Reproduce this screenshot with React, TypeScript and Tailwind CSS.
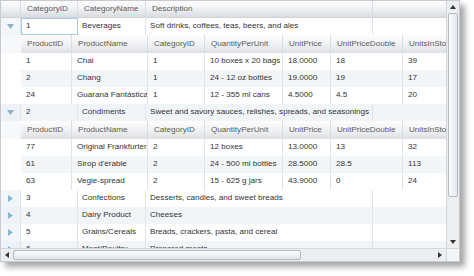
import React from "react";

type Col = { w: number; label: string };

const masterCols: Col[] = [
  { w: 57, label: "CategoryID" },
  { w: 68, label: "CategoryName" },
  { w: 227, label: "Description" },
  { w: 75, label: "" },
];

const detailCols: Col[] = [
  { w: 51, label: "ProductID" },
  { w: 76, label: "ProductName" },
  { w: 57, label: "CategoryID" },
  { w: 78, label: "QuantityPerUnit" },
  { w: 48, label: "UnitPrice" },
  { w: 72, label: "UnitPriceDouble" },
  { w: 60, label: "UnitsInStock" },
];

const beverages = [
  ["1", "Chai", "1", "10 boxes x 20 bags", "18.0000", "18", "39"],
  ["2", "Chang", "1", "24 - 12 oz bottles", "19.0000", "19", "17"],
  ["24", "Guaraná Fantástica", "1", "12 - 355 ml cans", "4.5000", "4.5", "20"],
];

const condiments = [
  ["77", "Original Frankfurter grüne Soße", "2", "12 boxes", "13.0000", "13", "32"],
  ["61", "Sirop d'érable", "2", "24 - 500 ml bottles", "28.5000", "28.5", "113"],
  ["63", "Vegie-spread", "2", "15 - 625 g jars", "43.9000", "0", "24"],
];

const collapsed = [
  ["3", "Confections", "Desserts, candies, and sweet breads"],
  ["4", "Dairy Product", "Cheeses"],
  ["5", "Grains/Cereals", "Breads, crackers, pasta, and cereal"],
  ["6", "Meat/Poultry", "Prepared meats"],
];

function Indicator({ open, tinted }: { open?: boolean; tinted?: boolean }) {
  return (
    <div
      className={`w-[20px] shrink-0 flex items-center justify-center border-r border-[#dfe5ea] ${
        tinted ? "bg-[#eef2f6]" : "bg-[#f3f6f8]"
      }`}
    >
      {open ? (
        <svg width="7" height="5" viewBox="0 0 7 5">
          <path d="M0 0h7L3.5 5z" fill="#8fb1c7" />
        </svg>
      ) : (
        <svg width="5" height="7" viewBox="0 0 5 7">
          <path d="M0 0v7l5-3.5z" fill="#86b8d2" />
        </svg>
      )}
    </div>
  );
}

function HeaderCell({ w, label, last }: Col & { last?: boolean }) {
  return (
    <div
      style={{ width: w }}
      className={`shrink-0 h-full flex items-center pl-[6px] whitespace-nowrap overflow-hidden text-[#5b5b5b] ${
        last ? "" : "border-r border-[#d9dde2]"
      }`}
    >
      {label}
    </div>
  );
}

function DetailBlock({ rows }: { rows: string[][] }) {
  return (
    <>
      <div className="flex h-[18px] shrink-0">
        <div className="w-[20px] shrink-0 bg-[#f7f8f9]" />
        <div className="flex h-full bg-gradient-to-b from-[#fdfdfd] via-[#f1f2f4] to-[#dcdfe3]">
          {detailCols.map((c, i) => (
            <HeaderCell key={i} {...c} last={i === detailCols.length - 1} />
          ))}
        </div>
      </div>
      {rows.map((r, ri) => (
        <div
          key={ri}
          className={`flex h-[17px] shrink-0 ${ri === 1 ? "bg-[#f3f6f9]" : "bg-white"}`}
        >
          <div className="w-[20px] shrink-0 bg-white" />
          {r.map((v, ci) => (
            <div
              key={ci}
              style={{ width: detailCols[ci].w }}
              className={`shrink-0 flex items-center pl-[5px] whitespace-nowrap overflow-hidden text-[#333] ${
                ci < r.length - 1 ? "border-r border-[#e1e5e9]" : ""
              }`}
            >
              {v}
            </div>
          ))}
        </div>
      ))}
    </>
  );
}

function MasterRow({
  id,
  name,
  desc,
  open,
  tinted,
  focus,
}: {
  id: string;
  name: string;
  desc: string;
  open?: boolean;
  tinted?: boolean;
  focus?: boolean;
}) {
  return (
    <div className={`flex h-[17px] shrink-0 ${tinted ? "bg-[#f1f5f8]" : "bg-white"}`}>
      <Indicator open={open} tinted={tinted} />
      <div
        className={`w-[57px] shrink-0 flex items-center text-[#333] ${
          focus ? "border border-[#a9c9e4] bg-white pl-[4px]" : "pl-[5px] border-r border-[#e1e5e9]"
        }`}
      >
        {id}
      </div>
      <div className="w-[68px] shrink-0 flex items-center pl-[4px] border-r border-[#e1e5e9] text-[#333] whitespace-nowrap overflow-hidden">
        {name}
      </div>
      <div className="w-[227px] shrink-0 flex items-center pl-[4px] border-r border-[#e1e5e9] text-[#333] whitespace-nowrap overflow-hidden">
        {desc}
      </div>
      <div className="flex-1" />
    </div>
  );
}

function Arrow({ dir }: { dir: "up" | "down" | "left" | "right" }) {
  const d = {
    up: "M0 4h6L3 0z",
    down: "M0 0h6L3 4z",
    left: "M4 0v6L0 3z",
    right: "M0 0v6l4-3z",
  }[dir];
  const vert = dir === "up" || dir === "down";
  return (
    <svg width={vert ? 6 : 4} height={vert ? 4 : 6} viewBox={vert ? "0 0 6 4" : "0 0 4 6"}>
      <path d={d} fill="#333" />
    </svg>
  );
}

export default function App() {
  return (
    <div
      className="w-[474px] h-[276px] bg-white overflow-hidden"
      style={{ fontFamily: '"Liberation Sans", Arial, sans-serif' }}
    >
      <div className="w-[460px] h-[262px] flex flex-col bg-white border border-[#c5cbd1] shadow-[5px_5px_6px_rgba(0,0,0,0.35)] text-[8.1px] leading-none">
        <div className="flex flex-1 min-h-0">
          {/* Grid body */}
          <div className="w-[446px] flex flex-col overflow-hidden">
            <div className="flex h-[17px] shrink-0 bg-gradient-to-b from-[#fdfdfd] via-[#eff0f2] to-[#d9dce0] border-b border-[#cfd4d9]">
              <div className="w-[20px] shrink-0 border-r border-[#d9dde2]" />
              {masterCols.map((c, i) => (
                <HeaderCell key={i} {...c} last={i === masterCols.length - 1} />
              ))}
            </div>
            <MasterRow id="1" name="Beverages" desc="Soft drinks, coffees, teas, beers, and ales" open focus />
            <DetailBlock rows={beverages} />
            <MasterRow
              id="2"
              name="Condiments"
              desc="Sweet and savory sauces, relishes, spreads, and seasonings"
              open
              tinted
            />
            <DetailBlock rows={condiments} />
            {collapsed.map((r, i) => (
              <MasterRow key={r[0]} id={r[0]} name={r[1]} desc={r[2]} tinted={i % 2 === 1} />
            ))}
          </div>
          {/* Vertical scrollbar */}
          <div className="w-[13px] flex flex-col items-stretch bg-[#eceef0] border-l border-[#d3d7db]">
            <div className="h-[12px] flex items-center justify-center">
              <Arrow dir="up" />
            </div>
            <div className="h-[184px] mx-[1px] rounded-[2px] border border-[#b4babf] bg-gradient-to-r from-[#fbfbfc] to-[#e3e6e9]" />
            <div className="flex-1" />
            <div className="h-[12px] flex items-center justify-center">
              <Arrow dir="down" />
            </div>
          </div>
        </div>
        {/* Horizontal scrollbar */}
        <div className="flex h-[13px] shrink-0">
          <div className="w-[446px] flex items-stretch bg-[#eceef0] border-t border-[#d3d7db]">
            <div className="w-[12px] flex items-center justify-center">
              <Arrow dir="left" />
            </div>
            <div className="w-[288px] my-[1px] rounded-[2px] border border-[#b4babf] bg-gradient-to-b from-[#fbfbfc] to-[#e3e6e9]" />
            <div className="flex-1" />
            <div className="w-[12px] flex items-center justify-center">
              <Arrow dir="right" />
            </div>
          </div>
          <div className="w-[13px] bg-[#f4f5f6] border-l border-t border-[#d3d7db]" />
        </div>
      </div>
    </div>
  );
}
